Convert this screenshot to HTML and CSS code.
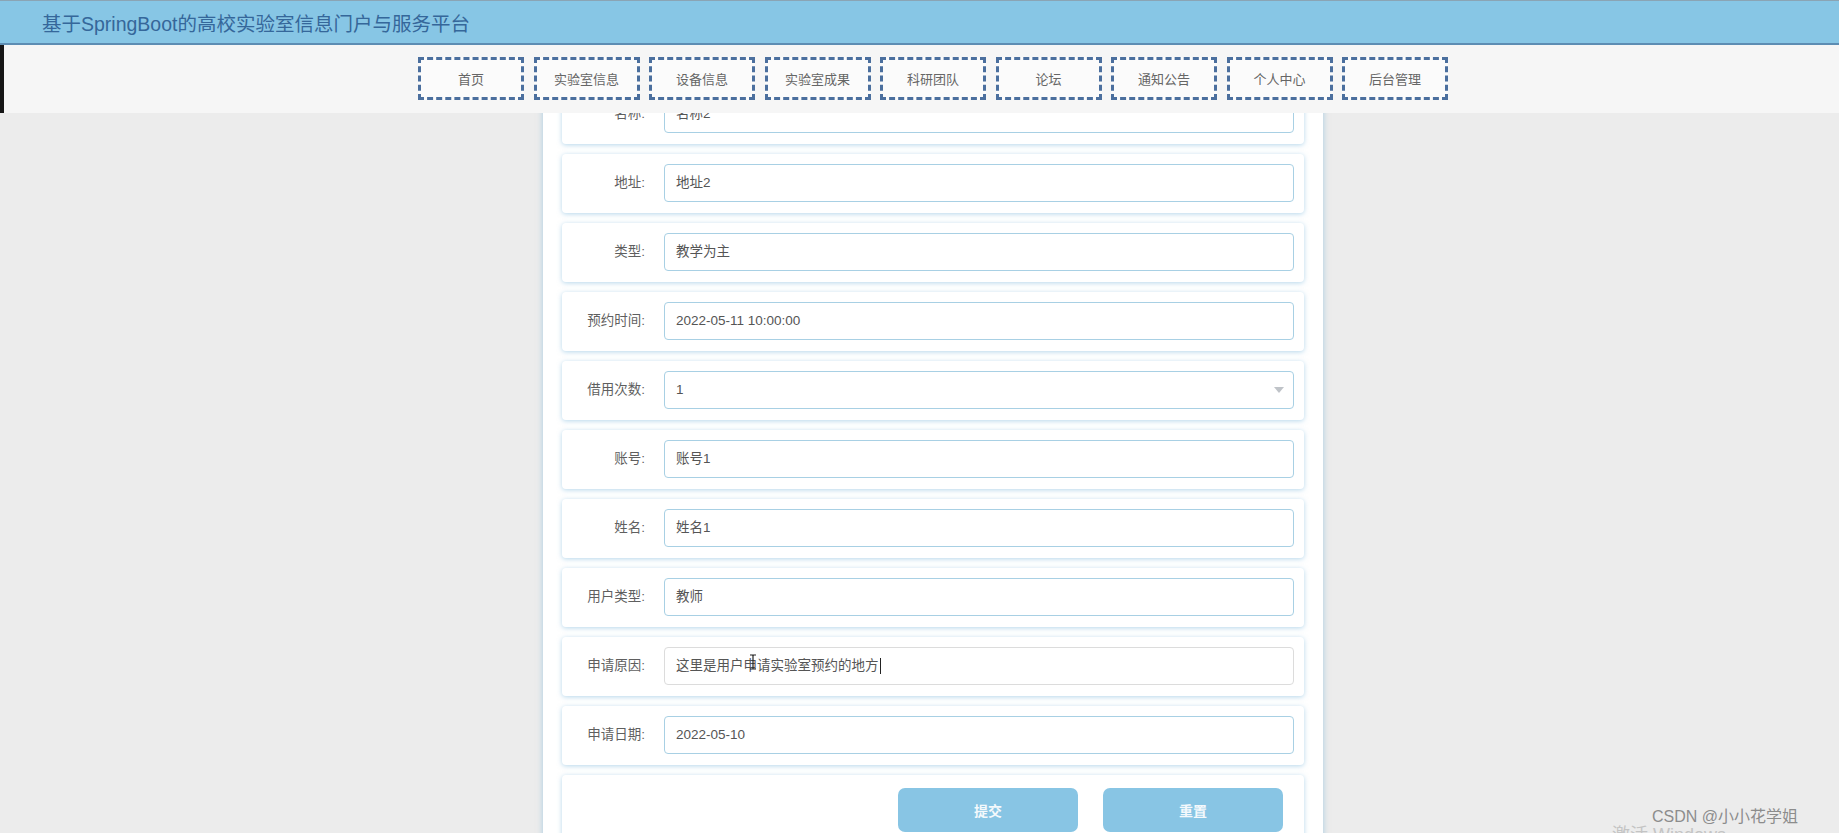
FILE: index.html
```html
<!DOCTYPE html>
<html lang="zh-CN">
<head>
<meta charset="utf-8">
<title>基于SpringBoot的高校实验室信息门户与服务平台</title>
<link rel="stylesheet" href="styles.css">
</head>
<body>
<header class="header">
  <div class="title">基于SpringBoot的高校实验室信息门户与服务平台</div>
</header>
<nav class="nav">
  <a class="nav-item">首页</a>
  <a class="nav-item">实验室信息</a>
  <a class="nav-item">设备信息</a>
  <a class="nav-item">实验室成果</a>
  <a class="nav-item">科研团队</a>
  <a class="nav-item">论坛</a>
  <a class="nav-item">通知公告</a>
  <a class="nav-item">个人中心</a>
  <a class="nav-item">后台管理</a>
</nav>
<main class="main">
  <section class="panel">
    <div class="row"><label class="label">名称:</label><div class="field">名称2</div></div>
    <div class="row"><label class="label">地址:</label><div class="field">地址2</div></div>
    <div class="row"><label class="label">类型:</label><div class="field">教学为主</div></div>
    <div class="row"><label class="label">预约时间:</label><div class="field">2022-05-11 10:00:00</div></div>
    <div class="row"><label class="label">借用次数:</label><div class="field select">1<span class="arrow"></span></div></div>
    <div class="row"><label class="label">账号:</label><div class="field">账号1</div></div>
    <div class="row"><label class="label">姓名:</label><div class="field">姓名1</div></div>
    <div class="row"><label class="label">用户类型:</label><div class="field">教师</div></div>
    <div class="row"><label class="label">申请原因:</label><div class="field focused">这里是用户申请实验室预约的地方<span class="caret"></span></div></div>
    <div class="row"><label class="label">申请日期:</label><div class="field">2022-05-10</div></div>
    <div class="row actions">
      <button class="btn">提交</button>
      <button class="btn">重置</button>
    </div>
  </section>
</main>
<svg class="ibeam" width="8" height="16" viewBox="0 0 8 16"><path d="M1 1h2.5l0.5 0.6 0.5-0.6H7M4 1.6v12.8M1 15h2.5l0.5-0.6 0.5 0.6H7" fill="none" stroke="#222" stroke-width="1.2"/></svg>
<div class="wm-csdn">CSDN @小小花学姐</div>
<div class="wm-win">激活 Windows</div>
</body>
</html>
```
FILE: styles.css
```css
* { box-sizing: border-box; }
html, body { margin: 0; padding: 0; }
body {
  width: 1839px;
  height: 833px;
  overflow: hidden;
  background: #ececec;
  font-family: "Liberation Sans", "Noto Sans CJK SC", sans-serif;
  position: relative;
}
.header {
  height: 45px;
  background: #87c6e5;
  border-top: 1px solid #8aa4b4;
  border-bottom: 2px solid #5d8db3;
  display: flex;
  align-items: center;
  padding-left: 42px;
}
.title {
  font-size: 19.5px;
  color: #35679a;
  letter-spacing: 0;
}
.nav {
  height: 68px;
  background: #f6f6f6;
  border-left: 4px solid #161616;
  display: flex;
  justify-content: center;
  align-items: flex-start;
  gap: 9.5px;
  padding-left: 23px;
  padding-top: 12px;
}
.nav-item {
  width: 106px;
  height: 43px;
  border: 3px dashed #4b6f9e;
  background: #fbfbfb;
  display: flex;
  align-items: center;
  justify-content: center;
  font-size: 13px;
  color: #666;
}
.main {
  height: 720px;
  overflow: hidden;
  display: flex;
  justify-content: center;
  padding-left: 27px;
}
.panel {
  width: 780px;
  margin-top: -28px;
  padding: 0 19px;
  background: #ffffff;
  box-shadow: 0 0 6px rgba(110, 175, 215, 0.55);
  align-self: flex-start;
}
.row {
  height: 59px;
  margin-bottom: 10px;
  background: #fff;
  border-radius: 4px;
  box-shadow: 0 1px 5px rgba(110, 175, 215, 0.5);
  display: flex;
  align-items: flex-start;
  padding-top: 10px;
  padding-right: 10px;
}
.label {
  width: 83px;
  margin-right: 19px;
  text-align: right;
  line-height: 38px;
  font-size: 13.5px;
  color: #5f5f5f;
}
.field {
  flex: 1;
  height: 38px;
  border: 1px solid #a8d0e4;
  border-radius: 4px;
  padding: 0 11px;
  line-height: 36px;
  font-size: 13.5px;
  color: #555;
  background: #fff;
  position: relative;
}
.field.focused { border-color: #dcdcdc; }
.caret {
  display: inline-block;
  width: 1px;
  height: 16px;
  background: #222;
  vertical-align: middle;
  margin-left: 1px;
}
.arrow {
  position: absolute;
  right: 9px;
  top: 15px;
  width: 0;
  height: 0;
  border-left: 5px solid transparent;
  border-right: 5px solid transparent;
  border-top: 6px solid #bfc3c8;
}
.actions {
  height: 70px;
  justify-content: flex-end;
  padding-top: 13px;
  padding-right: 21px;
  gap: 25px;
}
.btn {
  width: 180px;
  height: 44px;
  border: none;
  border-radius: 7px;
  background: #88c5e4;
  color: #f4f9fc;
  font-family: inherit;
  font-size: 14px;
  font-weight: bold;
}
.ibeam {
  position: absolute;
  left: 749px;
  top: 654px;
}
.wm-csdn {
  position: absolute;
  left: 1652px;
  top: 803px;
  font-size: 16px;
  color: #8c8c8c;
}
.wm-win {
  position: absolute;
  left: 1612px;
  top: 820px;
  font-size: 18px;
  color: #c4c4c4;
}
```
